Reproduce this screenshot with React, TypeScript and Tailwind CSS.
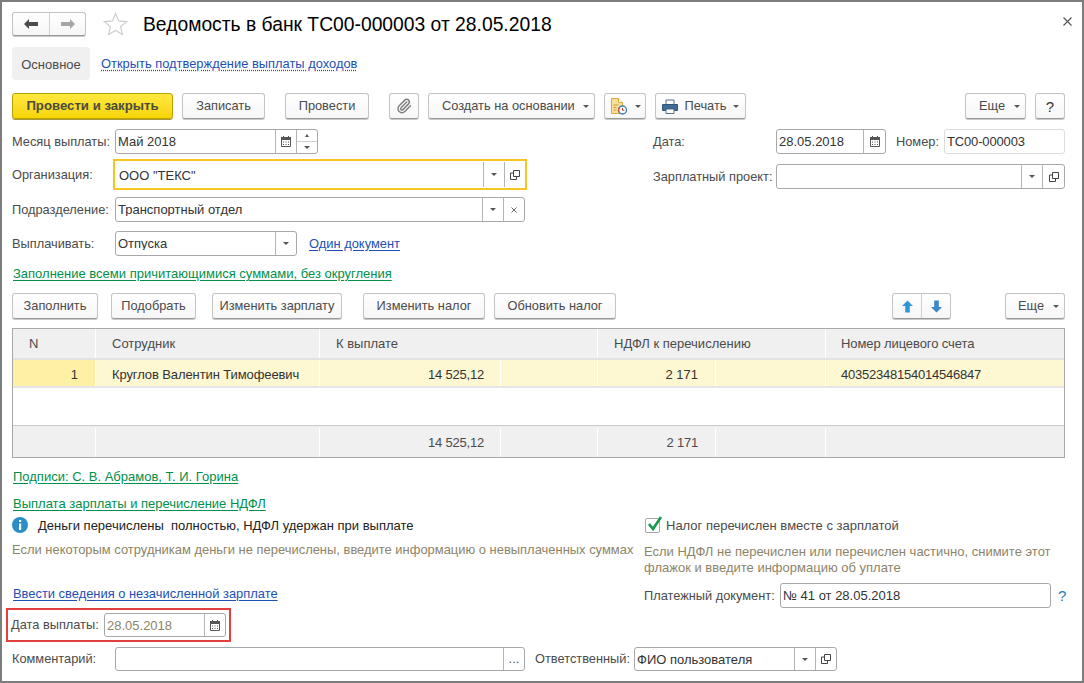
import type { ReactNode } from "react";
import { Paperclip } from "lucide-react";

const font = "font-['Liberation_Sans',Arial,sans-serif]";

function Caret() {
  return <span className="inline-block w-0 h-0 border-x-[3px] border-x-transparent border-t-[3px] border-t-[#555]" />;
}

function CalendarIcon() {
  return (
    <svg width="10" height="11" viewBox="0 0 10 11">
      <path d="M0.5 1.5h9v9h-9z" fill="#fff" stroke="#555" />
      <path d="M0 1h10v3H0zM2 0h1v2H2zM7 0h1v2H7z" fill="#555" />
      <path d="M2 5.5h1v1H2zM4.5 5.5h1v1h-1zM7 5.5h1v1H7zM2 8h1v1H2zM4.5 8h1v1h-1zM7 8h1v1H7z" fill="#555" />
    </svg>
  );
}

function OpenIcon() {
  return (
    <svg width="10" height="10" viewBox="0 0 10 10" fill="none" stroke="#444">
      <path d="M3.5 0.5h6v6h-6z" />
      <path d="M3.5 3h-3v6.5h6v-3" />
    </svg>
  );
}

function Btn({ className = "", children }: { className?: string; children: ReactNode }) {
  return (
    <div
      className={
        "h-[26px] shrink-0 flex items-center justify-center gap-[7px] rounded-[3px] border border-[#c4c4c4] border-b-[#9a9a9a] bg-gradient-to-b from-white to-[#f6f6f6] shadow-[0_1px_0_#c8c8c8] text-[12.8px] text-[#4b4b4b] " +
        className
      }
    >
      {children}
    </div>
  );
}

function Cell({ className = "", children }: { className?: string; children?: ReactNode }) {
  return <div className={"h-full shrink-0 flex items-center justify-center border-l border-[#b4b4b4] " + className}>{children}</div>;
}

function Field({ className = "", value, muted, children }: { className?: string; value?: string; muted?: boolean; children?: ReactNode }) {
  return (
    <div className={"h-[25px] shrink-0 flex items-center rounded-[3px] border border-[#a8a8a8] bg-white " + className}>
      <span className={"flex-1 pl-[2px] whitespace-nowrap overflow-hidden " + (muted ? "text-[#8d8468]" : "text-[#333]")}>{value}</span>
      {children}
    </div>
  );
}

function Label({ className = "", children }: { className?: string; children: ReactNode }) {
  return <span className={"shrink-0 whitespace-nowrap pt-[1px] text-[12.8px] text-[#4b4b4b] " + className}>{children}</span>;
}

function GreenLink({ children }: { children: ReactNode }) {
  return <span className="whitespace-nowrap text-[#00904a] underline underline-offset-2 decoration-[#00904a]">{children}</span>;
}

function BlueLink({ children, dotted }: { children: ReactNode; dotted?: boolean }) {
  return (
    <span className={"whitespace-nowrap text-[12.9px] text-[#1e50b4] underline underline-offset-2 " + (dotted ? "decoration-dotted" : "")}>{children}</span>
  );
}

function Table() {
  const cols = ["w-[83px]", "w-[224px]", "w-[181px]", "w-[97px]", "w-[118px]", "w-[110px]", "w-[238px]"];
  return (
    <div className="mt-[9px] w-[1053px] h-[130px] border border-[#a8a8a8] flex flex-col text-[#4b4b4b]">
      {/* header */}
      <div className="h-[31px] flex bg-[#f0f0f0] border-b-2 border-[#e2e2e2]">
        <div className="w-[83px] pl-[16px] flex items-center border-r border-white">N</div>
        <div className="w-[224px] pl-[16px] flex items-center border-r border-white">Сотрудник</div>
        <div className="w-[278px] pl-[16px] flex items-center border-r border-white">К выплате</div>
        <div className="w-[228px] pl-[16px] flex items-center border-r border-white">НДФЛ к перечислению</div>
        <div className="flex-1 pl-[15px] flex items-center tracking-[-0.1px]">Номер лицевого счета</div>
      </div>
      {/* row */}
      <div className="h-[28px] flex bg-[#fdf7d2] border-b-2 border-[#e6e6e6] text-[#333]">
        <div className="w-[83px] pr-[17px] pt-[2px] flex items-center justify-end bg-[#fef0a4] border-r border-white">1</div>
        <div className="w-[224px] pl-[16px] pt-[2px] flex items-center border-r border-white tracking-[-0.1px]">Круглов Валентин Тимофеевич</div>
        <div className="w-[181px] pr-[16px] pt-[2px] flex items-center justify-end border-r border-white tracking-[-0.2px]">14 525,12</div>
        <div className="w-[97px] border-r border-white" />
        <div className="w-[118px] pr-[17px] pt-[2px] flex items-center justify-end border-r border-white">2 171</div>
        <div className="w-[110px] border-r border-white" />
        <div className="flex-1 pl-[15px] pt-[2px] flex items-center tracking-[-0.23px]">40352348154014546847</div>
      </div>
      <div className="h-[38px] border-b border-[#c8c8c8] bg-white" />
      {/* footer */}
      <div className="flex-1 flex bg-[#f0f0f0] pt-[2px]">
        {cols.map((w, i) => (
          <div key={i} className={w + " flex items-center justify-end tracking-[-0.2px] " + (i < 6 ? "border-r border-white" : "flex-1") + (i === 2 ? " pr-[16px]" : "") + (i === 4 ? " pr-[17px]" : "")}>
            {i === 2 ? "14 525,12" : i === 4 ? "2 171" : ""}
          </div>
        ))}
      </div>
    </div>
  );
}

export default function App() {
  return (
    <div className={"w-[1084px] h-[683px] border-2 border-[#7d7d7d] bg-white text-[13px] leading-none overflow-hidden flex flex-col pl-[10px] " + font}>
      {/* title */}
      <div className="mt-[10px] h-[24px] flex items-center relative">
        <div className="w-[74px] h-[24px] flex rounded-[3px] border border-[#c4c4c4] border-b-[#9a9a9a] bg-gradient-to-b from-white to-[#f6f6f6] shadow-[0_1px_0_#c8c8c8]">
          <div className="w-[37px] flex items-center justify-center border-r border-[#d0d0d0]">
            <svg width="14" height="10" viewBox="0 0 14 10"><path d="M0 5l5-5v3h9v4H5v3z" fill="#4d4d4d" /></svg>
          </div>
          <div className="flex-1 flex items-center justify-center">
            <svg width="14" height="10" viewBox="0 0 14 10"><path d="M14 5L9 0v3H0v4h9v3z" fill="#a6a6a6" /></svg>
          </div>
        </div>
        <svg className="ml-[17px]" width="25" height="24" viewBox="0 0 25 24" fill="none">
          <path d="M12.5 1.5l3.2 7.4 8 .7-6.1 5.2 1.9 7.8-7-4.2-7 4.2 1.9-7.8L1.400 9.600l8-.7z" stroke="#cfcfcf" strokeWidth="1.200" />
        </svg>
        <span className="ml-[15px] pt-[2px] text-[19.3px] text-black whitespace-nowrap">Ведомость в банк ТС00-000003 от 28.05.2018</span>
        <svg className="absolute right-[10px] top-[5px]" width="9" height="9" viewBox="0 0 9 9" stroke="#555" strokeWidth="1.100"><path d="M0.500 0.500l8 8M8.500 0.500l-8 8" /></svg>
      </div>

      {/* tabs */}
      <div className="mt-[11px] h-[33px] flex items-center">
        <div className="w-[78px] h-full rounded-[4px] bg-[#f0f0f0] flex items-center justify-center text-[#4b4b4b] pt-[1px]">Основное</div>
        <span className="ml-[11px] pt-[1px]"><BlueLink dotted>Открыть подтверждение выплаты доходов</BlueLink></span>
      </div>

      {/* command bar */}
      <div className="mt-[13px] flex items-center">
        <div className="w-[161px] h-[26px] shrink-0 flex items-center justify-center rounded-[3px] border border-[#b8a100] bg-gradient-to-b from-[#ffe83c] to-[#f7d400] shadow-[0_1px_0_#a89a3c] font-bold text-[#4b4b3c] text-[13.2px]">Провести и закрыть</div>
        <Btn className="ml-[9px] w-[83px]">Записать</Btn>
        <Btn className="ml-[20px] w-[84px]">Провести</Btn>
        <Btn className="ml-[20px] w-[30px]"><Paperclip size={16} color="#808080" strokeWidth={2.2} /></Btn>
        <Btn className="ml-[9px] w-[167px] !justify-start pl-[13px] !gap-[8px]">Создать на основании <Caret /></Btn>
        <Btn className="ml-[9px] w-[42px]">
          <svg width="18" height="17" viewBox="0 0 18 17">
            <path d="M1.500 0.500h7l4 4v11h-11z" fill="#f7e09a" stroke="#dca93f" />
            <path d="M8.500 0.500v4h4" fill="#fff" stroke="#dca93f" />
            <path d="M3.500 7h5M3.500 9.500h3M3.500 12h3" stroke="#cf9a35" />
            <circle cx="12.500" cy="12" r="4" fill="#fff" stroke="#3f80b4" strokeWidth="1.400" />
            <path d="M9.700 9.200a4 4 0 0 0 0 5.600" fill="none" stroke="#d2503f" strokeWidth="1.400" />
            <path d="M12.500 10v2.200h1.800" stroke="#c0392b" fill="none" />
          </svg>
          <Caret />
        </Btn>
        <Btn className="ml-[9px] w-[91px]">
          <svg width="16" height="15" viewBox="0 0 16 15">
            <path d="M4 1h8v5H4z" fill="#fff" stroke="#5a6f85" />
            <path d="M0.500 5.500h15v6h-3v-2h-9v2h-3z" fill="#3f6d9a" stroke="#2f5578" />
            <path d="M4 10h8v4.500H4z" fill="#fff" stroke="#5a6f85" />
          </svg>
          Печать <Caret />
        </Btn>
        <Btn className="ml-[219px] w-[61px] !justify-start pl-[13px] !gap-[9px]">Еще <Caret /></Btn>
        <Btn className="ml-[9px] w-[30px] !text-[15px] !text-[#333]">?</Btn>
      </div>

      {/* top form: left and right columns */}
      <div className="mt-[10px] flex">
        <div className="w-[641px] shrink-0 flex flex-col">
          <div className="h-[25px] flex items-center">
            <Label className="w-[103px]">Месяц выплаты:</Label>
            <Field className="w-[203px]" value="Май 2018">
              <Cell className="w-[21px]"><CalendarIcon /></Cell>
              <div className="w-[21px] h-full flex flex-col border-l border-[#b4b4b4]">
                <div className="flex-1 flex items-center justify-center border-b border-[#d0d0d0]"><span className="w-0 h-0 border-x-[2.500px] border-x-transparent border-b-[3px] border-b-[#555]" /></div>
                <div className="flex-1 flex items-center justify-center"><Caret /></div>
              </div>
            </Field>
          </div>
          <div className="mt-[5px] h-[31px] flex items-center">
            <Label className="w-[101px]">Организация:</Label>
            <div className="w-[414px] h-[31px] border-2 border-[#f7c51f] flex items-center shrink-0">
              <span className="flex-1 pl-[4px] pt-[1px] text-[#333] whitespace-nowrap">ООО "ТЕКС"</span>
              <Cell className="w-[21px] !h-[25px]"><Caret /></Cell>
              <Cell className="w-[21px] !h-[25px]"><OpenIcon /></Cell>
            </div>
          </div>
          <div className="mt-[7px] h-[25px] flex items-center">
            <Label className="w-[103px]">Подразделение:</Label>
            <Field className="w-[410px]" value="Транспортный отдел">
              <Cell className="w-[21px]"><Caret /></Cell>
              <Cell className="w-[21px]">
                <svg width="6" height="6" viewBox="0 0 6 6" stroke="#666"><path d="M0.500 0.500l5 5M5.500 0.500l-5 5" /></svg>
              </Cell>
            </Field>
          </div>
          <div className="mt-[9px] h-[25px] flex items-center">
            <Label className="w-[103px]">Выплачивать:</Label>
            <Field className="w-[182px]" value="Отпуска">
              <Cell className="w-[21px]"><Caret /></Cell>
            </Field>
            <span className="ml-[12px]"><BlueLink>Один документ</BlueLink></span>
          </div>
        </div>
        <div className="flex-1 flex flex-col">
          <div className="h-[25px] flex items-center">
            <Label className="w-[123px]">Дата:</Label>
            <Field className="w-[110px]" value="28.05.2018">
              <Cell className="w-[22px]"><CalendarIcon /></Cell>
            </Field>
            <Label className="ml-[10px] w-[48px]">Номер:</Label>
            <Field className="w-[121px] !border-[#dcdcdc] tracking-[-0.15px]" value="ТС00-000003" />
          </div>
          <div className="mt-[10px] h-[25px] flex items-center">
            <Label className="w-[123px]">Зарплатный проект:</Label>
            <Field className="w-[289px]">
              <Cell className="w-[21px]"><Caret /></Cell>
              <Cell className="w-[22px]"><OpenIcon /></Cell>
            </Field>
          </div>
        </div>
      </div>

      <div className="mt-[10px] h-[15px] flex items-center pl-[1px]"><GreenLink>Заполнение всеми причитающимися суммами, без округления</GreenLink></div>

      {/* table toolbar */}
      <div className="mt-[12px] flex items-center">
        <Btn className="w-[86px]">Заполнить</Btn>
        <Btn className="ml-[13px] w-[85px]">Подобрать</Btn>
        <Btn className="ml-[16px] w-[130px]">Изменить зарплату</Btn>
        <Btn className="ml-[21px] w-[122px]">Изменить налог</Btn>
        <Btn className="ml-[9px] w-[122px]">Обновить налог</Btn>
        <div className="ml-[276px] w-[59px] h-[26px] shrink-0 flex rounded-[3px] border border-[#c4c4c4] border-b-[#9a9a9a] bg-gradient-to-b from-white to-[#f6f6f6] shadow-[0_1px_0_#c8c8c8]">
          <div className="w-[29px] flex items-center justify-center border-r border-[#d0d0d0]">
            <svg width="11" height="13" viewBox="0 0 12 13"><path d="M6 0l6 6H8.500v7h-5V6H0z" fill="#2f97d9" /></svg>
          </div>
          <div className="flex-1 flex items-center justify-center">
            <svg width="11" height="13" viewBox="0 0 12 13"><path d="M6 13l6-6H8.500V0h-5v7H0z" fill="#3a88c9" /></svg>
          </div>
        </div>
        <Btn className="ml-[54px] w-[60px] !justify-start pl-[12px] !gap-[9px]">Еще <Caret /></Btn>
      </div>

      <Table />

      {/* bottom form */}
      <div className="mt-[11px] flex">
        <div className="w-[632px] shrink-0 flex flex-col">
          <div className="h-[15px] flex items-center pl-[1px]"><GreenLink>Подписи: С. В. Абрамов, Т. И. Горина</GreenLink></div>
          <div className="mt-[12px] h-[15px] flex items-center pl-[1px]"><GreenLink>Выплата зарплаты и перечисление НДФЛ</GreenLink></div>
          <div className="mt-[6px] h-[16px] flex items-center">
            <svg width="16" height="16" viewBox="0 0 16 16">
              <circle cx="8" cy="8" r="8" fill="#2b8fc7" />
              <path d="M7 3h2.200v2H7zM7 6.500h2.200V13H7z" fill="#fff" />
            </svg>
            <span className="ml-[10px] text-[#222] whitespace-pre">Деньги перечислены  полностью, НДФЛ удержан при выплате</span>
          </div>
          <div className="mt-[10px] h-[15px] flex items-center text-[12.95px] text-[#8d8468] whitespace-nowrap">Если некоторым сотрудникам деньги не перечислены, введите информацию о невыплаченных суммах</div>
          <div className="mt-[29px] h-[15px] flex items-center pl-[1px]"><BlueLink>Ввести сведения о незачисленной зарплате</BlueLink></div>
        </div>
        <div className="flex-1 flex flex-col">
          <div className="h-[15px]" />
          <div className="mt-[33px] h-[16px] flex items-center pl-[1px]">
            <div className="relative w-[15px] h-[15px] border border-[#a8a8a8] rounded-[2px] bg-white">
              <svg className="absolute left-[1px] -top-[3px]" width="15" height="16" viewBox="0 0 15 16"><path d="M2 8l4 5 8-12" fill="none" stroke="#17974a" strokeWidth="2.600" /></svg>
            </div>
            <span className="ml-[6px] text-[#4b4b4b] whitespace-nowrap">Налог перечислен вместе с зарплатой</span>
          </div>
          <div className="mt-[11px] text-[#8d8468] leading-[16px] whitespace-nowrap">
            <div>Если НДФЛ не перечислен или перечислен частично, снимите этот</div>
            <div>флажок и введите информацию об уплате</div>
          </div>
          <div className="mt-[7px] h-[25px] flex items-center">
            <Label className="w-[136px]">Платежный документ:</Label>
            <Field className="w-[271px]" value="№ 41 от 28.05.2018" />
            <span className="ml-[7px] text-[#1b7fc0] text-[15px]">?</span>
          </div>
        </div>
      </div>

      {/* payment date in red frame */}
      <div className="-ml-[6px] w-[225px] h-[34px] border-2 border-[#e2403c] flex items-center pl-[3px]">
        <Label className="w-[93px] !pt-0">Дата выплаты:</Label>
        <Field className="w-[122px] !h-[24px]" value="28.05.2018" muted>
          <Cell className="w-[21px]"><CalendarIcon /></Cell>
        </Field>
      </div>

      <div className="mt-[5px] h-[24px] flex items-center">
        <Label className="w-[103px]">Комментарий:</Label>
        <Field className="w-[410px] !h-[24px]">
          <Cell className="w-[21px] text-[#555] pb-[1px]">...</Cell>
        </Field>
        <Label className="ml-[10px] w-[99px]">Ответственный:</Label>
        <Field className="w-[203px] !h-[24px]" value="ФИО пользователя">
          <Cell className="w-[21px]"><Caret /></Cell>
          <Cell className="w-[21px]"><OpenIcon /></Cell>
        </Field>
      </div>
    </div>
  );
}
